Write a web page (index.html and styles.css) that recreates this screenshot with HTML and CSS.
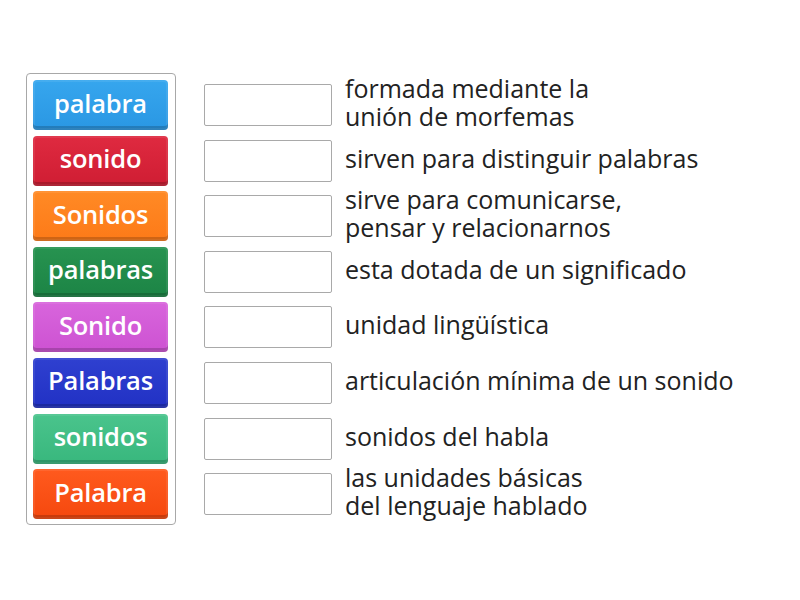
FILE: index.html
```html
<!DOCTYPE html>
<html lang="es">
<head>
<meta charset="utf-8">
<link rel="stylesheet" href="styles.css">
</head>
<body>
<div class="game">
  <div class="panel">
    <div class="tile c1">palabra</div>
    <div class="tile c2">sonido</div>
    <div class="tile c3">Sonidos</div>
    <div class="tile c4">palabras</div>
    <div class="tile c5">Sonido</div>
    <div class="tile c6">Palabras</div>
    <div class="tile c7">sonidos</div>
    <div class="tile c8">Palabra</div>
  </div>
  <div class="targets">
    <div class="row"><div class="box"></div><div class="def">formada mediante la<br>unión de morfemas</div></div>
    <div class="row"><div class="box"></div><div class="def">sirven para distinguir palabras</div></div>
    <div class="row"><div class="box"></div><div class="def">sirve para comunicarse,<br>pensar y relacionarnos</div></div>
    <div class="row"><div class="box"></div><div class="def">esta dotada de un significado</div></div>
    <div class="row"><div class="box"></div><div class="def">unidad lingüística</div></div>
    <div class="row"><div class="box"></div><div class="def">articulación mínima de un sonido</div></div>
    <div class="row"><div class="box"></div><div class="def">sonidos del habla</div></div>
    <div class="row"><div class="box"></div><div class="def">las unidades básicas<br>del lenguaje hablado</div></div>
  </div>
</div>
</body>
</html>
```
FILE: styles.css
```css
html, body {
  margin: 0;
  padding: 0;
  background: #ffffff;
}
body {
  font-family: "Open Sans", "Noto Sans", sans-serif;
}
.game {
  display: flex;
  align-items: flex-start;
  padding: 73px 0 0 26px;
}
.panel {
  width: 135px;
  padding: 6px 7px 5px 6px;
  border: 1px solid #a8a8a8;
  border-radius: 4px;
  display: flex;
  flex-direction: column;
  gap: 5.6px;
}
.tile {
  height: 50px;
  border-radius: 4px;
  color: #ffffff;
  font-size: 25.5px;
  font-weight: 600;
  letter-spacing: -0.2px;
  display: flex;
  align-items: center;
  justify-content: center;
  box-sizing: border-box;
  padding-bottom: 5px;
  box-shadow: inset 0 -4px 0 rgba(0,0,0,0.18), inset 0 0 0 2px rgba(255,255,255,0.08);
}
.c1 { background: linear-gradient(#36a6ee, #2a97e3); }
.c2 { background: linear-gradient(#df2a40, #cf1d33); }
.c3 { background: linear-gradient(#ff8a25, #fd7a18); }
.c4 { background: linear-gradient(#279350, #1c8445); }
.c5 { background: linear-gradient(#d865dc, #cd52d2); }
.c6 { background: linear-gradient(#2f40d0, #2131c4); }
.c7 { background: linear-gradient(#4ac48c, #38b77d); }
.c8 { background: linear-gradient(#ff5a1e, #f5480e); }
.targets {
  margin-left: 28px;
  padding-top: 7px;
  display: flex;
  flex-direction: column;
  gap: 5.6px;
}
.row {
  height: 50px;
  display: flex;
  align-items: center;
}
.box {
  width: 126px;
  height: 40px;
  border: 1px solid #a9a9a9;
  border-radius: 2px;
  flex: none;
}
.def {
  margin-left: 13px;
  margin-bottom: 6px;
  font-size: 25px;
  line-height: 28px;
  color: #222222;
  white-space: nowrap;
}
```
